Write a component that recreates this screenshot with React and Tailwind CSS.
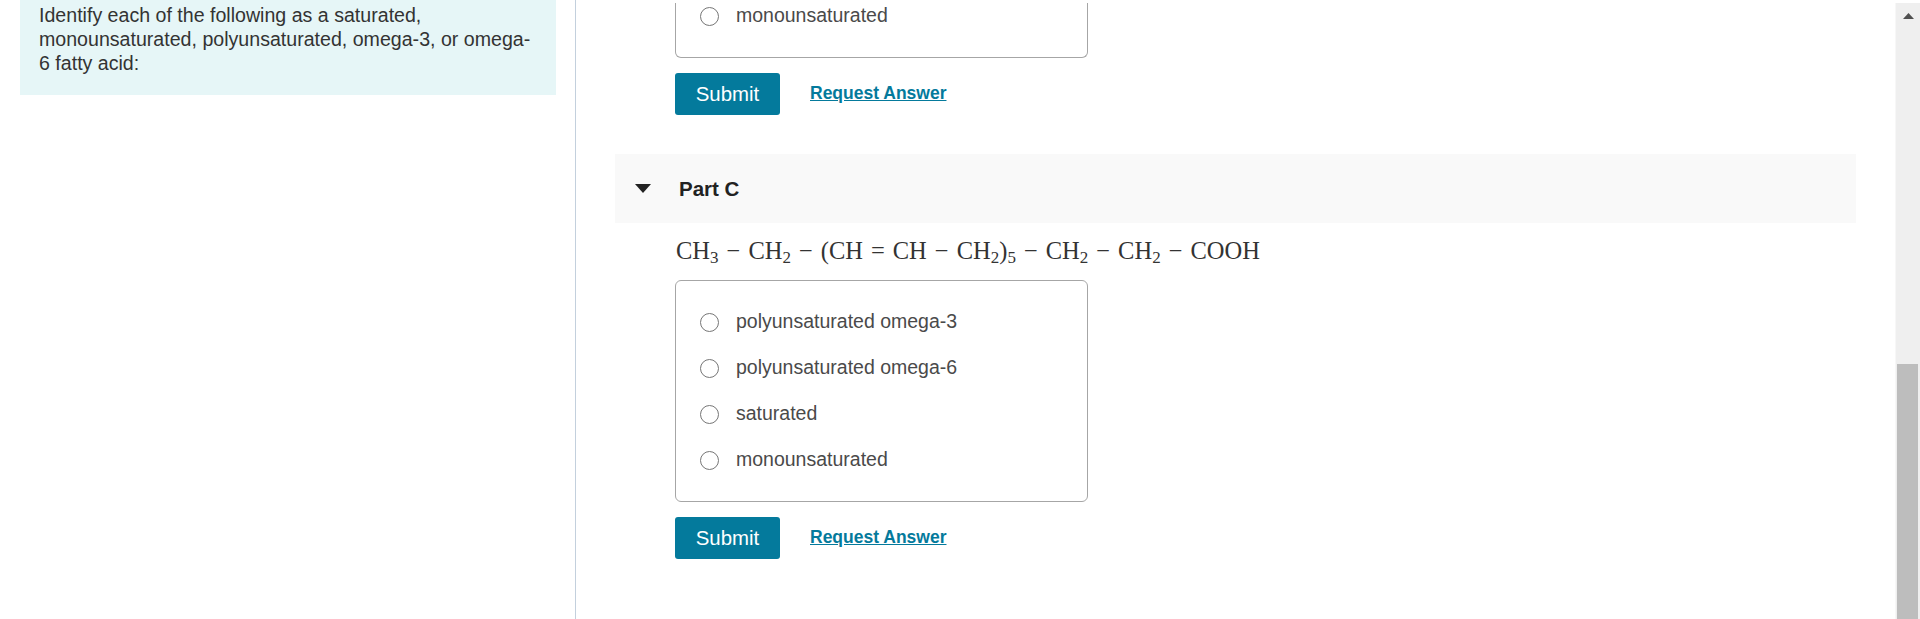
const sans = 'font-["Liberation_Sans",Arial,sans-serif]';

function Sub({ children }) {
  return <span className="relative top-[4px] text-[17px]">{children}</span>;
}

function Op({ children }) {
  return <span className="mx-[8px]">{children}</span>;
}

function Option({ label }) {
  return (
    <label className="flex h-[46px] shrink-0 items-center gap-[17px]">
      <span className="h-[19px] w-[19px] rounded-full border border-[#767676] bg-white" />
      <span className="text-[19.5px] text-[#4a4a4a]">{label}</span>
    </label>
  );
}

function Actions() {
  return (
    <div className="flex items-center gap-[30px]">
      <button className="h-[42px] w-[105px] rounded-[3px] bg-[#047a9c] text-[20.4px] text-white">Submit</button>
      <a href="#" className="-mt-[2px] text-[17.5px] font-bold text-[#047a9c] underline">Request Answer</a>
    </div>
  );
}

export default function App() {
  return (
    <div className={`flex h-screen overflow-hidden bg-white ${sans}`}>
      {/* instructions */}
      <div className="w-[576px] shrink-0 border-r border-[#c3d0dd] pl-[20px]">
        <div className="h-[95px] w-[536px] bg-[#e6f6f7] px-[19px] pt-[3px] text-[19.6px] leading-[24px] text-[#333]">
          Identify each of the following as a saturated, monounsaturated, polyunsaturated, omega-3, or omega-6 fatty acid:
        </div>
      </div>

      {/* parts */}
      <div className="min-w-0 flex-1 pl-[39px] pr-[39px] pt-[3px]">
        <div className="ml-[60px] flex h-[55px] w-[413px] flex-col justify-end rounded-b-[6px] border border-t-0 border-[#a6a6a6] pb-[18px] pl-[24px]">
          <Option label="monounsaturated" />
        </div>
        <div className="ml-[60px] mt-[15px]">
          <Actions />
        </div>

        <div className="mt-[39px] flex h-[69px] items-center bg-[#f9f9f9] pl-[20px]">
          <svg width="16" height="9" viewBox="0 0 16 9" className="shrink-0"><path d="M0 0h16L8 9z" fill="#222" /></svg>
          <span className="ml-[28px] pt-[2px] text-[20.5px] font-bold text-[#222]">Part C</span>
        </div>

        <div className="ml-[61px] mt-[10px] h-[47px] whitespace-nowrap font-['Liberation_Serif',serif] text-[24.5px] leading-[36px] text-[#333]">
          CH<Sub>3</Sub><Op>−</Op>CH<Sub>2</Sub><Op>−</Op>(CH<Op>=</Op>CH<Op>−</Op>CH<Sub>2</Sub>)<Sub>5</Sub><Op>−</Op>CH<Sub>2</Sub><Op>−</Op>CH<Sub>2</Sub><Op>−</Op>COOH
        </div>

        <div className="ml-[60px] w-[413px] rounded-[6px] border border-[#a6a6a6] py-[18px] pl-[24px]">
          <Option label="polyunsaturated omega-3" />
          <Option label="polyunsaturated omega-6" />
          <Option label="saturated" />
          <Option label="monounsaturated" />
        </div>
        <div className="ml-[60px] mt-[15px]">
          <Actions />
        </div>
      </div>

      {/* scrollbar */}
      <div className="mt-[3px] flex w-[25px] shrink-0 flex-col border-l border-[#f7f7f7] bg-[#efefef]">
        <div className="flex h-[361px] justify-center pt-[10px]">
          <svg width="11" height="6" viewBox="0 0 11 6"><path d="M5.5 0L11 6H0z" fill="#505050" /></svg>
        </div>
        <div className="ml-[1px] w-[21px] flex-1 bg-[#bdbdbd]" />
      </div>
    </div>
  );
}
